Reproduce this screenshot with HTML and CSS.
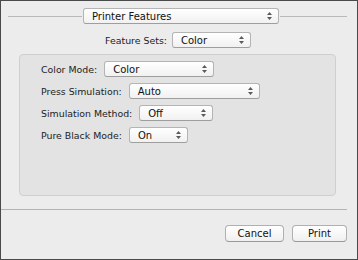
FILE: index.html
```html
<!DOCTYPE html>
<html lang="en">
  <head>
    <meta charset="UTF-8" />
    <title>Printer Features</title>
    <link rel="stylesheet" href="styles.css">
  </head>

  <body>
    <div class="dialog">
      <!-- Panel selector -->
      <div class="panel-row">
        <span class="rule rule-left"></span>
        <div class="popup w-panel">
          <span>Printer Features</span>
          <svg class="arrows" width="5" height="8" viewBox="0 0 5 8"><path d="M2.5 0 L5 3 L0 3 Z M0 5 L5 5 L2.5 8 Z" /></svg>
        </div>
        <span class="rule"></span>
      </div>

      <div class="sets-row">
        <label>Feature Sets:</label>
        <div class="popup w-sets">
          <span>Color</span>
          <svg class="arrows" width="5" height="8" viewBox="0 0 5 8"><path d="M2.5 0 L5 3 L0 3 Z M0 5 L5 5 L2.5 8 Z" /></svg>
        </div>
      </div>

      <!-- Settings group -->
      <div class="group">
        <div class="field">
          <label>Color Mode:</label>
          <div class="popup w-mode">
            <span>Color</span>
            <svg class="arrows" width="5" height="8" viewBox="0 0 5 8"><path d="M2.5 0 L5 3 L0 3 Z M0 5 L5 5 L2.5 8 Z" /></svg>
          </div>
        </div>
        <div class="field">
          <label>Press Simulation:</label>
          <div class="popup w-press">
            <span>Auto</span>
            <svg class="arrows" width="5" height="8" viewBox="0 0 5 8"><path d="M2.5 0 L5 3 L0 3 Z M0 5 L5 5 L2.5 8 Z" /></svg>
          </div>
        </div>
        <div class="field">
          <label>Simulation Method:</label>
          <div class="popup w-method">
            <span>Off</span>
            <svg class="arrows" width="5" height="8" viewBox="0 0 5 8"><path d="M2.5 0 L5 3 L0 3 Z M0 5 L5 5 L2.5 8 Z" /></svg>
          </div>
        </div>
        <div class="field">
          <label>Pure Black Mode:</label>
          <div class="popup w-black">
            <span>On</span>
            <svg class="arrows" width="5" height="8" viewBox="0 0 5 8"><path d="M2.5 0 L5 3 L0 3 Z M0 5 L5 5 L2.5 8 Z" /></svg>
          </div>
        </div>
      </div>

      <div class="bottom-rule"></div>

      <div class="buttons">
        <button class="btn w-cancel">Cancel</button>
        <button class="btn w-print">Print</button>
      </div>
    </div>
  </body>
</html>
```

FILE: styles.css
```css
html,
body {
  margin: 0;
  padding: 0;
}

body {
  font-family: "DejaVu Sans", sans-serif;
  font-size: 9.4px;
  color: #222;
}

.dialog {
  box-sizing: border-box;
  width: 358px;
  height: 260px;
  background-color: #ececec;
  border: 1px solid #4a4a4a;
  padding-top: 7px;
}

/* Top panel selector */
.panel-row {
  display: flex;
  align-items: center;
  padding: 0 10px 0 7px;
}

.rule {
  flex: 1;
  height: 1px;
  background-color: #b9b9b9;
}

.rule-left {
  flex: 0 0 74px;
}

.sets-row {
  display: flex;
  align-items: center;
  justify-content: center;
  gap: 5px;
  margin-top: 8px;
  padding-right: 2px;
}

/* Popup buttons */
.popup {
  box-sizing: border-box;
  height: 16px;
  display: flex;
  align-items: center;
  justify-content: space-between;
  padding: 0 6px 0 8px;
  background: linear-gradient(#ffffff, #f1f1f1);
  border: 1px solid #b4b4b4;
  border-bottom-color: #9e9e9e;
  border-radius: 3px;
  font-size: 10px;
  color: #111;
}

.arrows {
  fill: #5a5a5a;
}

.w-panel { width: 196px; margin: 0 1px; }
.w-sets { width: 79px; }
.w-mode { width: 110px; }
.w-press { width: 131px; }
.w-method { width: 74px; }
.w-black { width: 59px; }

/* Group box */
.group {
  box-sizing: border-box;
  height: 142px;
  margin: 6px 21px 0 18px;
  padding: 6px 0 0 21px;
  background-color: #e3e3e3;
  border: 1px solid #cfcfcf;
  border-radius: 4px;
  display: flex;
  flex-direction: column;
  gap: 6px;
}

.field {
  display: flex;
  align-items: center;
  gap: 7px;
  height: 16px;
}

.bottom-rule {
  height: 1px;
  background-color: #b3b3b3;
  margin: 13px 10px 0 0;
}

/* Dialog buttons */
.buttons {
  display: flex;
  justify-content: flex-end;
  gap: 8px;
  margin-top: 15px;
  padding-right: 10px;
}

.btn {
  box-sizing: border-box;
  height: 17px;
  padding: 0;
  font-family: "DejaVu Sans", sans-serif;
  font-size: 10px;
  color: #111;
  background: linear-gradient(#ffffff, #f0f0f0);
  border: 1px solid #b0b0b0;
  border-bottom-color: #999;
  border-radius: 4px;
}

.w-cancel { width: 59px; }
.w-print { width: 55px; }
```
